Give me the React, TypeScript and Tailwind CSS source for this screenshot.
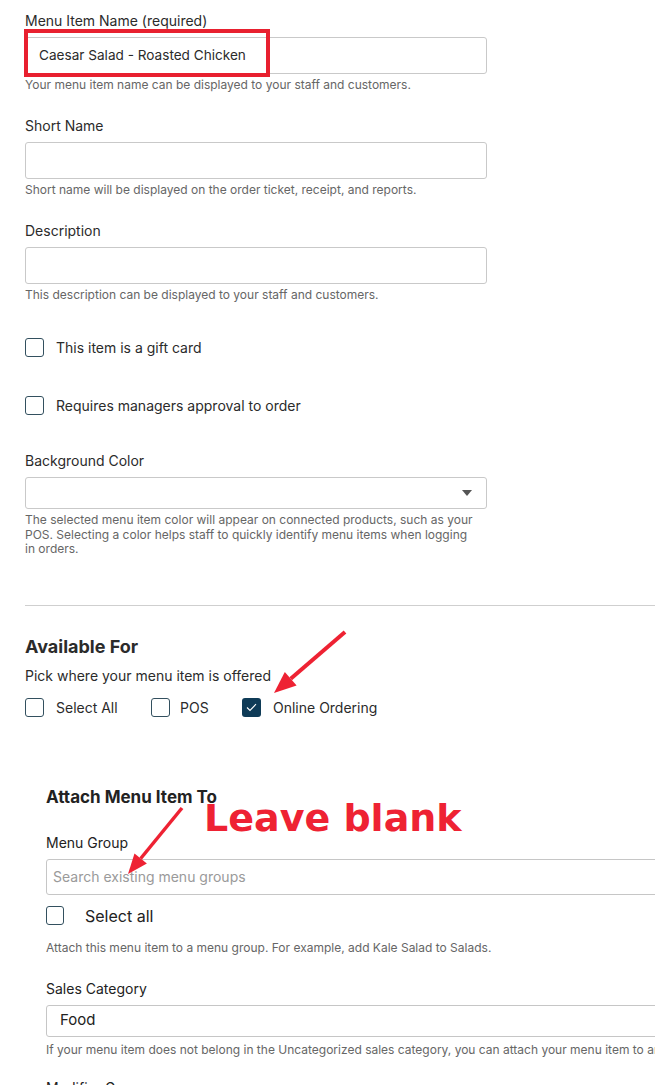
import React from "react";

function Box({ checked = false }: { checked?: boolean }) {
  return checked ? (
    <span className="flex h-[19px] w-[19px] shrink-0 items-center justify-center rounded-[3px] bg-[#0f3b57]">
      <svg width="11" height="9" viewBox="0 0 11 9" fill="none">
        <path d="M1 4.5 L4 7.5 L10 1.2" stroke="#ffffff" strokeWidth="1.1" />
      </svg>
    </span>
  ) : (
    <span className="block h-[19px] w-[19px] shrink-0 rounded-[3px] border-[1.5px] border-[#33505f] bg-white" />
  );
}

export default function App() {
  const top = { fontFamily: "Inter, 'Open Sans', sans-serif" };
  const bottom = { fontFamily: "Inter, Roboto, sans-serif" };
  return (
    <div className="relative h-[1085px] w-[655px] overflow-hidden bg-white text-[#2b2b2b]">
      <div style={top} className="px-[25px] pt-[11px]">
        <div className="text-[14px] leading-[20px]">Menu Item Name (required)</div>
        <div className="mt-[6px] flex h-[37px] w-[462px] items-center rounded-[3px] border border-[#c9c9c9] pl-[13px] text-[13.6px]">
          Caesar Salad - Roasted Chicken
        </div>
        <div className="mt-[3px] text-[12px] leading-[16px] text-[#666]">
          Your menu item name can be displayed to your staff and customers.
        </div>

        <div className="mt-[23px] text-[14px] leading-[20px]">Short Name</div>
        <div className="mt-[6px] h-[37px] w-[462px] rounded-[3px] border border-[#c9c9c9]" />
        <div className="mt-[3px] text-[12px] leading-[16px] text-[#666]">
          Short name will be displayed on the order ticket, receipt, and reports.
        </div>

        <div className="mt-[23px] text-[14px] leading-[20px]">Description</div>
        <div className="mt-[6px] h-[37px] w-[462px] rounded-[3px] border border-[#c9c9c9]" />
        <div className="mt-[3px] text-[12px] leading-[16px] text-[#666]">
          This description can be displayed to your staff and customers.
        </div>

        <div className="mt-[34px] flex h-[20px] items-center gap-[12px] text-[14px]">
          <Box />
          <span>This item is a gift card</span>
        </div>
        <div className="mt-[38px] flex h-[20px] items-center gap-[12px] text-[14px]">
          <Box />
          <span>Requires managers approval to order</span>
        </div>

        <div className="mt-[36px] text-[14px] leading-[20px]">Background Color</div>
        <div className="mt-[6px] flex h-[32px] w-[462px] items-center justify-end rounded-[3px] border border-[#c9c9c9] pr-[14px]">
          <svg width="10" height="6" viewBox="0 0 10 6">
            <path d="M0 0 L10 0 L5 6 Z" fill="#555" />
          </svg>
        </div>
        <div className="mt-[4px] w-[452px] text-[12px] leading-[14.5px] text-[#666]">
          The selected menu item color will appear on connected products, such as your POS. Selecting a color helps staff to quickly identify menu items when logging in orders.
        </div>

        <div className="mt-[48px] w-[700px] border-t border-[#cfcfcf]" />

        <div className="mt-[29px] text-[18px] font-bold leading-[24px] text-[#2b2b2b]">Available For</div>
        <div className="mt-[7px] text-[14px] leading-[20px]">Pick where your menu item is offered</div>
        <div className="mt-[12px] flex h-[20px] items-center text-[14px]">
          <Box />
          <span className="ml-[12px] w-[95px]">Select All</span>
          <Box />
          <span className="ml-[10px] w-[62px]">POS</span>
          <Box checked />
          <span className="ml-[12px]">Online Ordering</span>
        </div>
      </div>

      <div style={bottom} className="pl-[46px] text-[#222]">
        <div className="mt-[67px] text-[17px] font-bold leading-[24px]">Attach Menu Item To</div>
        <div className="mt-[24px] text-[14px] leading-[20px]">Menu Group</div>
        <div className="mt-[6px] flex h-[36px] w-[650px] items-center rounded-[3px] border border-[#c6c6c6] pl-[6px] text-[14px] text-[#9a9a9a]">
          Search existing menu groups
        </div>
        <div className="mt-[10px] flex h-[22px] items-center">
          <span className="block h-[19px] w-[18px] shrink-0 rounded-[3px] border-[1.5px] border-[#33505f]" />
          <span className="ml-[21px] text-[16px]">Select all</span>
        </div>
        <div className="mt-[13px] text-[12px] leading-[16px] text-[#666]">
          Attach this menu item to a menu group. For example, add Kale Salad to Salads.
        </div>
        <div className="mt-[23px] text-[14px] leading-[20px]">Sales Category</div>
        <div className="mt-[6px] flex h-[32px] w-[650px] items-center rounded-[3px] border border-[#c6c6c6] pl-[13px] text-[15px]">
          Food
        </div>
        <div className="mt-[5px] w-[609px] overflow-hidden whitespace-nowrap text-[12px] leading-[16px] text-[#666]">
          If your menu item does not belong in the Uncategorized sales category, you can attach your menu item to an
        </div>
        <div className="mt-[20px] text-[14px] leading-[20px]">Modifier Groups</div>
      </div>

      <div className="pointer-events-none absolute left-[24px] top-[29px] h-[48px] w-[246px] border-[4px] border-[#e8202f]" />

      <div
        className="pointer-events-none absolute left-[204px] top-[796px] text-[38px] font-bold leading-[44px] text-[#ee2233]"
        style={{ fontFamily: "'DejaVu Sans', 'Liberation Sans', sans-serif" }}
      >
        Leave blank
      </div>

      <svg className="pointer-events-none absolute left-0 top-0" width="655" height="1085" viewBox="0 0 655 1085">
        <line x1="345" y1="632" x2="290.7" y2="678.7" stroke="#ee2233" strokeWidth="4" />
        <polygon points="274,693 296.6,685.5 284.8,671.9" fill="#ee2233" />
        <line x1="182" y1="808" x2="140.7" y2="858.5" stroke="#ee2233" strokeWidth="3.5" />
        <polygon points="128,874 146.9,863.6 134.5,853.4" fill="#ee2233" />
      </svg>
    </div>
  );
}
